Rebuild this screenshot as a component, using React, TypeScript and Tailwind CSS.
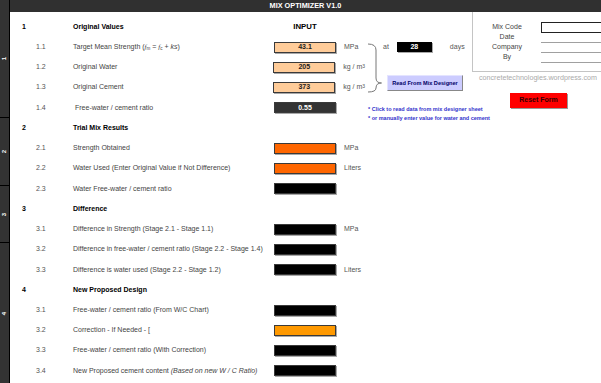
import type { ReactNode } from 'react';

type Box = { bg: string; value?: string; dark?: boolean };

type RowProps = {
  num: string;
  label: ReactNode;
  heading?: boolean;
  box?: Box;
  unit?: ReactNode;
  extra?: ReactNode;
};

const m3 = (
  <>
    kg / m<sup className="text-[5px] relative -top-[1px]">3</sup>
  </>
);

function Row({ num, label, heading, box, unit, extra }: RowProps) {
  return (
    <div className="flex h-[20.24px] items-center whitespace-nowrap text-[7px]">
      <div className={heading ? 'w-[63px] pl-[12px] font-bold text-black' : 'w-[63px] pl-[26px] text-[#555]'}>{num}</div>
      <div className={heading ? 'w-[201px] font-bold text-black' : 'w-[201px] text-[#444]'}>{label}</div>
      {box && (
        <div
          className={`flex h-[11px] w-[62px] items-center justify-center border border-[#3a3a3a] font-bold shadow-[1px_1px_0_#a8a8a8] ${box.bg} ${box.dark ? 'text-white' : 'text-[#222]'}`}
        >
          {box.value}
        </div>
      )}
      {extra}
      {unit && <div className="ml-[8px] text-[#555]">{unit}</div>}
    </div>
  );
}

function Sidebar() {
  return (
    <div className="flex w-[10px] shrink-0 flex-col border-r border-black bg-[#333]">
      {[
        { n: '1', h: 'h-[123px]' },
        { n: '2', h: 'h-[71px]' },
        { n: '3', h: 'h-[60px]' },
      ].map((s) => (
        <div key={s.n} className={`${s.h} flex items-center justify-center border-b border-black`}>
          <span className="-rotate-90 text-[6px] font-bold text-white">{s.n}</span>
        </div>
      ))}
      <div className="flex h-[146px] items-center justify-center">
        <span className="-rotate-90 text-[6px] font-bold text-white">4</span>
      </div>
    </div>
  );
}

function RightPanel() {
  return (
    <div className="flex flex-1">
      {/* brace, days, read button, notes */}
      <div className="flex w-[107px] shrink-0 flex-col">
        <div className="flex">
          <svg className="ml-[3px] mt-[30px] h-[52px] w-[14px] shrink-0" viewBox="0 0 14 52" fill="none">
            <path d="M0 2 Q8 2 8 8 L8 36 Q8 41 13.5 41 Q8 41 8 46 Q8 50 0 50" stroke="#777" strokeWidth="1" />
          </svg>
          <div className="mt-[30px] flex flex-col">
            <div className="flex h-[10px] items-center whitespace-nowrap text-[7px] text-[#555]">
              <span className="ml-[1px]">at</span>
              <div className="ml-[8px] flex h-[10px] w-[35px] items-center justify-center bg-black font-bold text-white shadow-[1px_1px_0_#a8a8a8]">
                28
              </div>
              <span className="ml-[18px]">days</span>
            </div>
            <div className="ml-[5px] mt-[23px] flex h-[16px] w-[76px] items-center justify-center whitespace-nowrap border border-t-[#e4e4ff] border-l-[#e4e4ff] border-r-[#888] border-b-[#888] bg-[#ccccff] text-[5.6px] font-bold text-[#000066]">
              Read From Mix Designer
            </div>
          </div>
        </div>
        <div className="ml-[3px] mt-[11px] whitespace-nowrap text-[5.5px] font-bold leading-[9px] text-[#3333cc]">
          <div>* Click to read data from mix designer sheet</div>
          <div>* or manually enter value for water and cement</div>
        </div>
      </div>

      {/* info box, site, reset */}
      <div className="flex w-[129px] shrink-0 flex-col">
        <div className="flex h-[60px] border-b border-l border-[#c4c4c4]">
          <div className="w-[68px] pt-[10.3px] text-center text-[7px] leading-[10px] text-[#444]">
            <div>Mix Code</div>
            <div>Date</div>
            <div>Company</div>
            <div>By</div>
          </div>
          <div className="flex-1 pt-[10.3px]">
            <div className="h-[10.4px] border-[1.5px] border-r-0 border-[#222]" />
            <div className="h-[10px] border-b border-[#a0a0a0]" />
            <div className="h-[10px] border-b border-[#a0a0a0]" />
            <div className="h-[10px] border-b border-[#a0a0a0]" />
          </div>
        </div>
        <div className="mt-[2px] whitespace-nowrap pl-[7px] text-[7.15px] leading-[9px] text-[#aaa]">
          concretetechnologies.wordpress.com
        </div>
        <div className="ml-[38px] mt-[10px] flex h-[15px] w-[57px] items-center justify-center bg-[#ff0000] text-[7px] font-bold text-[#330000] shadow-[1px_1px_0_#999]">
          Reset Form
        </div>
      </div>
    </div>
  );
}

export default function App() {
  const peach = 'bg-[#ffcc99]';
  const orange = 'bg-[#ff6600]';
  const black = 'bg-black';

  return (
    <div className="flex h-[383px] w-[601px] overflow-hidden bg-white font-['Liberation_Sans',Arial,sans-serif]">
      <Sidebar />
      <div className="flex min-w-0 flex-1 flex-col">
        <div className="flex h-[12px] shrink-0 items-center justify-center bg-[#303030] text-[7.3px] font-bold text-white">
          MIX OPTIMIZER V1.0
        </div>

        {/* section 1 with side panel */}
        <div className="flex h-[106px] shrink-0">
          <div className="w-[355px] shrink-0 pt-[4.9px]">
            <Row
              num="1"
              heading
              label="Original Values"
              extra={<div className="w-[62px] text-center text-[7.8px] font-bold">INPUT</div>}
            />
            <Row
              num="1.1"
              label={
                <>
                  Target Mean Strength (<i className="font-['Liberation_Serif',serif]">f</i>
                  <sub className="text-[4.5px]">m</sub> = <i className="font-['Liberation_Serif',serif]">f</i>
                  <sub className="text-[4.5px]">c</sub> + <i>ks</i>)
                </>
              }
              box={{ bg: peach, value: '43.1' }}
              unit="MPa"
            />
            <Row num="1.2" label="Original Water" box={{ bg: peach, value: '205' }} unit={m3} />
            <Row num="1.3" label="Original Cement" box={{ bg: peach, value: '373' }} unit={m3} />
            <Row
              num="1.4"
              label={<span className="pl-[2px]">Free-water / cement ratio</span>}
              box={{ bg: 'bg-[#333]', value: '0.55', dark: true }}
            />
          </div>
          <RightPanel />
        </div>

        {/* sections 2 - 4 */}
        <div>
          <Row num="2" heading label="Trial Mix Results" />
          <Row num="2.1" label="Strength Obtained" box={{ bg: orange }} unit="MPa" />
          <Row num="2.2" label="Water Used (Enter Original Value if Not Difference)" box={{ bg: orange }} unit="Liters" />
          <Row num="2.3" label="Water Free-water / cement ratio" box={{ bg: black }} />
          <Row num="3" heading label="Difference" />
          <Row num="3.1" label="Difference in Strength (Stage 2.1 - Stage 1.1)" box={{ bg: black }} unit="MPa" />
          <Row num="3.2" label="Difference in free-water / cement ratio (Stage 2.2 - Stage 1.4)" box={{ bg: black }} />
          <Row num="3.3" label="Difference is water used (Stage 2.2 - Stage 1.2)" box={{ bg: black }} unit="Liters" />
          <Row num="4" heading label="New Proposed Design" />
          <Row num="3.1" label="Free-water / cement ratio (From W/C Chart)" box={{ bg: black }} />
          <Row num="3.2" label="Correction - If Needed - [" box={{ bg: 'bg-[#ff9900]' }} />
          <Row num="3.3" label="Free-water / cement ratio (With Correction)" box={{ bg: black }} />
          <Row
            num="3.4"
            label={
              <>
                New Proposed cement content <i>(Based on new W / C Ratio)</i>
              </>
            }
            box={{ bg: black }}
          />
        </div>
      </div>
    </div>
  );
}
